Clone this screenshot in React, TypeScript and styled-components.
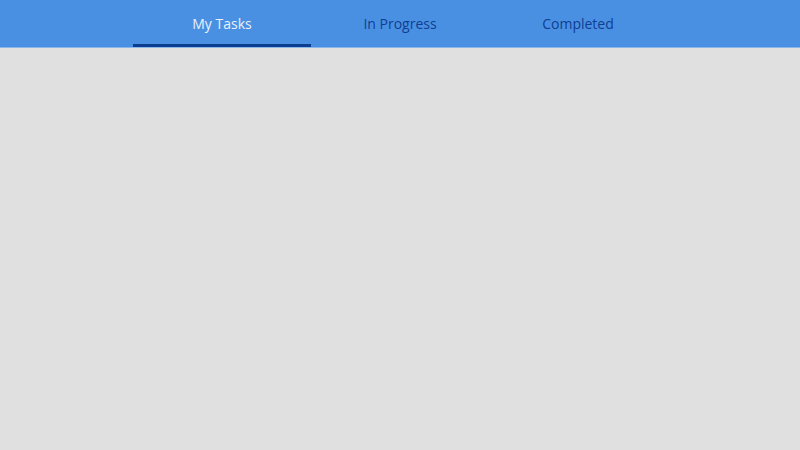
import { useState } from "react";
import styled, { createGlobalStyle } from "styled-components";

const GlobalStyle = createGlobalStyle`
  html, body {
    margin: 0;
    padding: 0;
    height: 100%;
    background: #e0e0e0;
    font-family: "Open Sans", "Noto Sans", sans-serif;
  }
  #root {
    height: 100%;
  }
`;

const tabs = ["My Tasks", "In Progress", "Completed"];

const App = () => {
  const [active, setActive] = useState(0);

  return (
    <>
      <GlobalStyle />
      <Page>
        <TabBar>
          {tabs.map((label, index) => (
            <Tab
              key={label}
              $active={index === active}
              onClick={() => setActive(index)}
            >
              {label}
            </Tab>
          ))}
        </TabBar>
        <Content />
      </Page>
    </>
  );
};

export default App;

const Page = styled.div`
  display: flex;
  flex-direction: column;
  height: 100vh;
`;

const TabBar = styled.div`
  display: flex;
  justify-content: center;
  height: 47px;
  background: #4a90e2;
  border-bottom: 1px solid #8ab8ec;
`;

const Tab = styled.button<{ $active: boolean }>`
  width: 178px;
  border: none;
  background: transparent;
  padding: 2px 0 0;
  font-family: inherit;
  font-size: 14px;
  color: ${({ $active }) => ($active ? "#e8f1fc" : "#0d3f94")};
  border-bottom: 3px solid
    ${({ $active }) => ($active ? "#0b3d8f" : "transparent")};
  cursor: pointer;
`;

const Content = styled.div`
  flex: 1;
  background: #e0e0e0;
`;
